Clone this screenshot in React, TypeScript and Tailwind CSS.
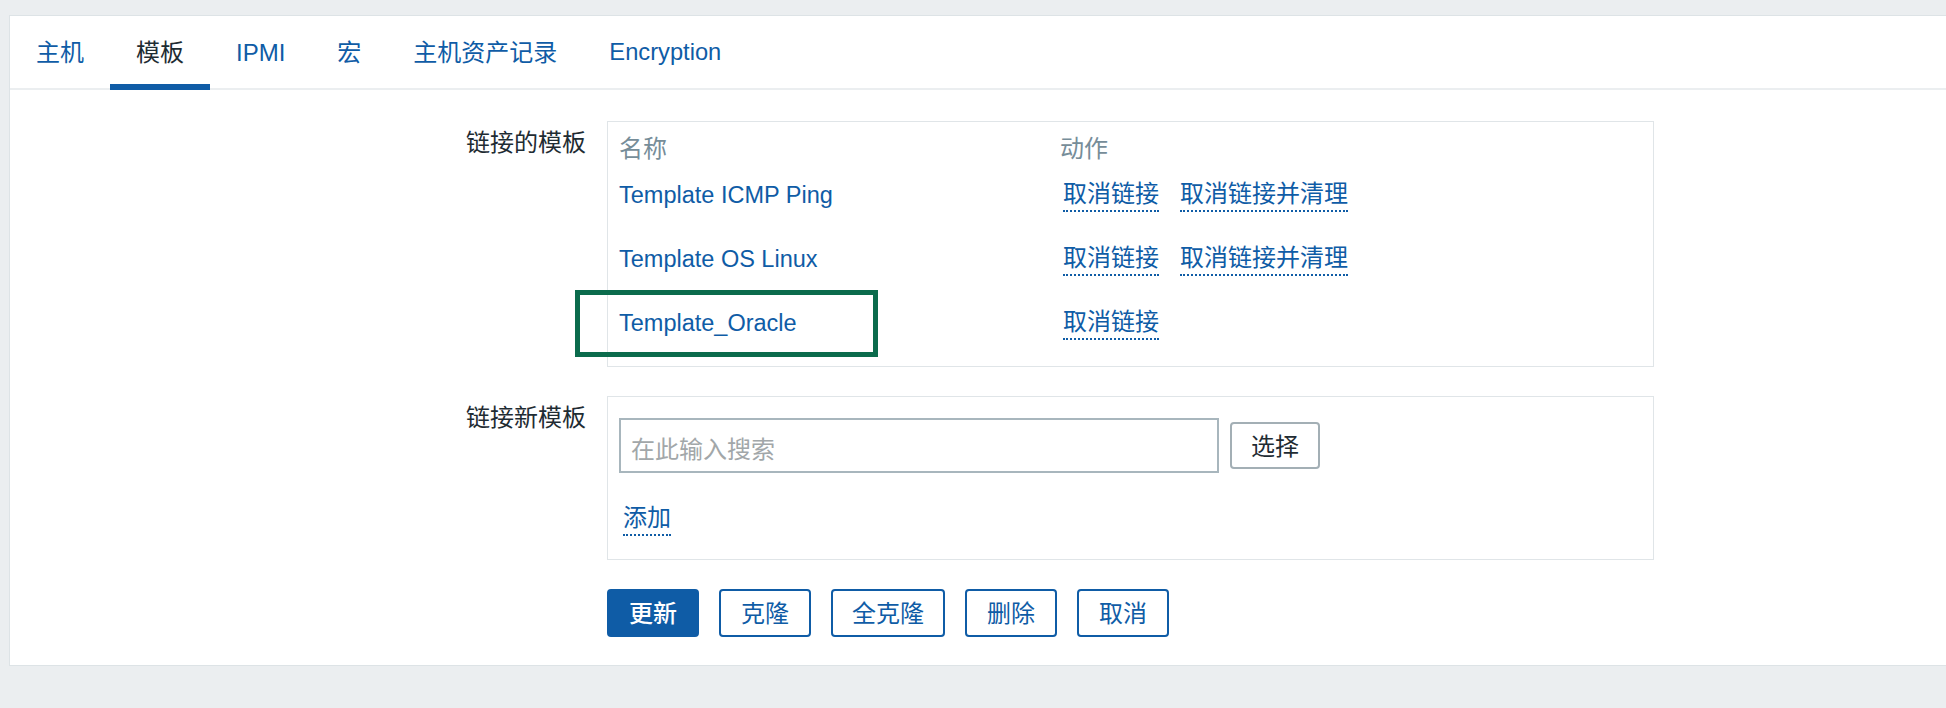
import React from "react";

const FONT = { fontFamily: '"Liberation Sans", "Noto Sans CJK SC", sans-serif' };

const tabs = ["主机", "模板", "IPMI", "宏", "主机资产记录", "Encryption"];

const rows = [
  { name: "Template ICMP Ping", clear: true },
  { name: "Template OS Linux", clear: true },
  { name: "Template_Oracle", clear: false },
];

function DotLink({ children, className = "" }: { children: React.ReactNode; className?: string }) {
  return (
    <span
      className={`inline-block border-b-2 border-dotted border-[#0f5ca6] leading-[32px] text-[#0f5ca6] ${className}`}
    >
      {children}
    </span>
  );
}

export default function App() {
  return (
    <div
      className="h-[708px] w-[1946px] overflow-hidden bg-[#ebeef0] pt-[15px] pl-[9px] text-[24px] text-[#1f2c33]"
      style={FONT}
    >
      <div className="h-[651px] w-[1945px] border border-[#dde3e6] bg-white">
        {/* Tabs */}
        <div className="flex h-[74px] border-b-2 border-[#ebeef0]">
          {tabs.map((t, i) => (
            <div
              key={t}
              className={`relative flex h-full items-center px-[26px] pt-[2px] ${
                i === 1 ? "text-[#1f2c33]" : "text-[#0f5ca6]"
              } ${t === "Encryption" ? "text-[23.7px]" : ""}`}
            >
              {t}
              {i === 1 && (
                <span className="absolute bottom-[-2px] left-0 right-0 h-[6px] bg-[#0f5ca6]" />
              )}
            </div>
          ))}
        </div>

        {/* Form */}
        <div className="mt-[31px] grid grid-cols-[576px_1047px] gap-x-[21px]">
          {/* Linked templates */}
          <div className="pt-[7px] text-right leading-[30px]">链接的模板</div>
          <div className="relative border border-[#e0e5e8] px-[11px] pb-[11px]">
            <div className="flex h-[41px] pt-[12px] leading-[30px] text-[#768d99]">
              <div className="w-[441px]">名称</div>
              <div>动作</div>
            </div>
            {rows.map((r) => (
              <div key={r.name} className="flex h-[64px] items-center">
                <div className="w-[441px] text-[23.5px] leading-[30px] text-[#0f5ca6]">{r.name}</div>
                <div className="ml-[3px] flex gap-[21px]">
                  <DotLink>取消链接</DotLink>
                  {r.clear && <DotLink>取消链接并清理</DotLink>}
                </div>
              </div>
            ))}
            <div className="absolute left-[-33px] top-[168px] h-[67px] w-[303px] border-[5px] border-[#0b6b4c]" />
          </div>

          {/* Link new templates */}
          <div className="mt-[29px] pt-[7px] text-right leading-[30px]">链接新模板</div>
          <div className="mt-[29px] border border-[#e0e5e8] px-[11px] pt-[21px] pb-[23px]">
            <div className="flex items-center gap-[11px]">
              <div className="flex h-[55px] w-[600px] items-center border-2 border-[#a8b6bd] pl-[10px] pt-[8px] text-[#a2a7a9]">
                在此输入搜索
              </div>
              <button className="flex h-[47px] w-[90px] items-center justify-center rounded-[4px] border-2 border-[#a3afb5] bg-white pt-[3px] text-[#1f2c33]">
                选择
              </button>
            </div>
            <div className="mt-[27px] ml-[4px]">
              <DotLink>添加</DotLink>
            </div>
          </div>

          {/* Buttons */}
          <div />
          <div className="mt-[29px] flex gap-[20px]">
            <button className="flex h-[48px] items-center rounded-[4px] border-2 border-[#0f5ca6] bg-[#0f5ca6] px-[20px] pt-[2px] font-medium text-white">
              更新
            </button>
            <button className="flex h-[48px] items-center rounded-[4px] border-2 border-[#0f5ca6] bg-white px-[20px] pt-[2px] text-[#0f5ca6]">
              克隆
            </button>
            <button className="flex h-[48px] items-center rounded-[4px] border-2 border-[#0f5ca6] bg-white px-[19px] pt-[2px] text-[#0f5ca6]">
              全克隆
            </button>
            <button className="flex h-[48px] items-center rounded-[4px] border-2 border-[#0f5ca6] bg-white px-[20px] pt-[2px] text-[#0f5ca6]">
              删除
            </button>
            <button className="flex h-[48px] items-center rounded-[4px] border-2 border-[#0f5ca6] bg-white px-[20px] pt-[2px] text-[#0f5ca6]">
              取消
            </button>
          </div>
        </div>
      </div>
    </div>
  );
}
